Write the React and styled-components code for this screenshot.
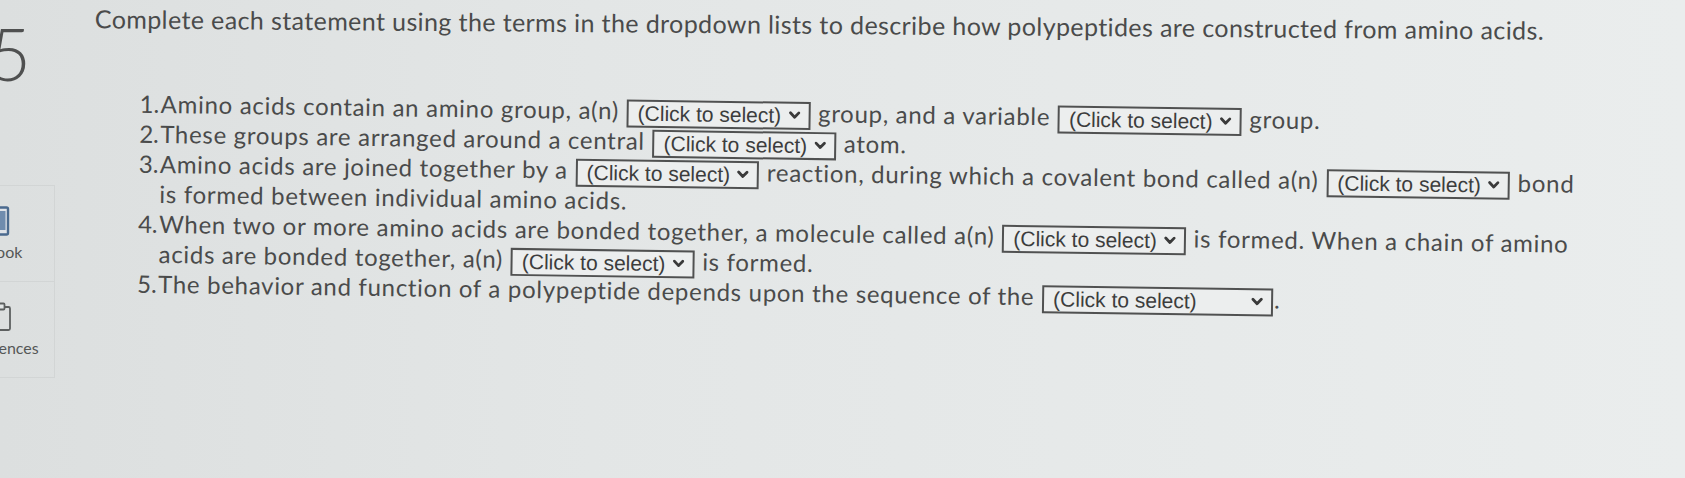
import React from "react"
import styled, { createGlobalStyle } from "styled-components"

const GlobalStyle = createGlobalStyle`
  html, body {
    margin: 0;
    padding: 0;
  }
  body {
    width: 1685px;
    height: 478px;
    overflow: hidden;
    background: linear-gradient(90deg, #dcdfdf 0%, #e3e6e6 35%, #eaeded 100%);
    font-family: Lato, "Liberation Sans", sans-serif;
    color: #4a4b4b;
  }
`

const Page = styled.div`
  display: flex;
  height: 478px;
  overflow: hidden;
`

const Sidebar = styled.aside`
  flex: 0 0 110px;
  margin-left: -55px;
  display: flex;
  flex-direction: column;
`

const QuestionNumber = styled.div`
  height: 185px;
  padding-right: 24px;
  text-align: right;
  font-size: 72px;
  font-weight: 300;
  line-height: 106px;
  color: #4f5050;
`

const ToolBox = styled.div`
  display: flex;
  flex-direction: column;
  align-items: center;
  justify-content: center;
  gap: 6px;
  height: 95px;
  border: 1px solid #d2d5d5;
  border-top: ${(p) => (p.$first ? "1px solid #d2d5d5" : "none")};
  font-size: 16px;
  color: #555757;
`

// the photo is taken at a slight angle, so the content runs downhill a little
const Main = styled.main`
  flex: 1;
  padding: 0 0 0 40px;
  transform: rotate(0.45deg);
  transform-origin: 0 0;
`

const Heading = styled.p`
  margin: 0;
  font-size: 25px;
  line-height: 36px;
  letter-spacing: 0.4px;
`

const List = styled.ol`
  list-style: none;
  margin: 52px 0 0 45px;
  padding: 0;
  width: 1448px;
  font-size: 24px;
  line-height: 30px;
  letter-spacing: 0.7px;
  transform: rotate(0.35deg);
  transform-origin: 0 50%;
`

const Item = styled.li`
  display: flex;
`

const Num = styled.span`
  flex: 0 0 21px;
  letter-spacing: 0;
`

const Text = styled.span`
  flex: 1;
`

const SelectBox = styled.span`
  display: inline-flex;
  align-items: center;
  justify-content: space-between;
  gap: 7px;
  box-sizing: border-box;
  width: ${(p) => (p.$wide ? "231px" : "auto")};
  height: 28px;
  padding: 0 8px 0 9px;
  margin: -3px 1px;
  vertical-align: middle;
  border: 2px solid #505151;
  background: #eceeee;
  font-family: "Liberation Sans", Arial, sans-serif;
  font-size: 21px;
  letter-spacing: 0;
  line-height: 1;
  color: #3c3d3d;
`

const Chevron = () => (
  <svg width="12" height="9" viewBox="0 0 12 9">
    <path d="M1.8 2 L6 6.4 L10.2 2" fill="none" stroke="#3a3a3a" strokeWidth="2.8" strokeLinecap="round" strokeLinejoin="round" />
  </svg>
)

const Select = ({ wide }) => (
  <SelectBox $wide={wide}>
    (Click to select)
    <Chevron />
  </SelectBox>
)

const BookIcon = () => (
  <svg width="20" height="30" viewBox="0 0 20 30">
    <rect x="2" y="1.5" width="16" height="27" rx="1.5" fill="#dfe3e8" stroke="#4a6a8e" strokeWidth="2.4" />
    <rect x="4.5" y="5" width="11" height="19" fill="#6f8cae" />
  </svg>
)

const ClipboardIcon = () => (
  <svg width="24" height="30" viewBox="0 0 24 30">
    <rect x="2" y="5" width="20" height="23" rx="1.5" fill="none" stroke="#5d6060" strokeWidth="1.8" />
    <rect x="7.5" y="1.5" width="9" height="6" rx="1" fill="#e3e6e6" stroke="#5d6060" strokeWidth="1.8" />
  </svg>
)

const App = () => (
  <Page>
    <GlobalStyle />
    <Sidebar>
      <QuestionNumber>5</QuestionNumber>
      <ToolBox $first>
        <BookIcon />
        <span>eBook</span>
      </ToolBox>
      <ToolBox>
        <ClipboardIcon />
        <span>References</span>
      </ToolBox>
    </Sidebar>
    <Main>
      <Heading>
        Complete each statement using the terms in the dropdown lists to describe how polypeptides are
        constructed from amino acids.
      </Heading>
      <List>
        <Item>
          <Num>1.</Num>
          <Text>
            Amino acids contain an amino group, a(n) <Select /> group, and a variable <Select /> group.
          </Text>
        </Item>
        <Item>
          <Num>2.</Num>
          <Text>
            These groups are arranged around a central <Select /> atom.
          </Text>
        </Item>
        <Item>
          <Num>3.</Num>
          <Text>
            Amino acids are joined together by a <Select /> reaction, during which a covalent bond called
            a(n) <Select /> bond is formed between individual amino acids.
          </Text>
        </Item>
        <Item>
          <Num>4.</Num>
          <Text>
            When two or more amino acids are bonded together, a molecule called a(n) <Select /> is formed.
            When a chain of amino acids are bonded together, a(n) <Select /> is formed.
          </Text>
        </Item>
        <Item>
          <Num>5.</Num>
          <Text>
            The behavior and function of a polypeptide depends upon the sequence of the <Select wide />.
          </Text>
        </Item>
      </List>
    </Main>
  </Page>
)

export default App
